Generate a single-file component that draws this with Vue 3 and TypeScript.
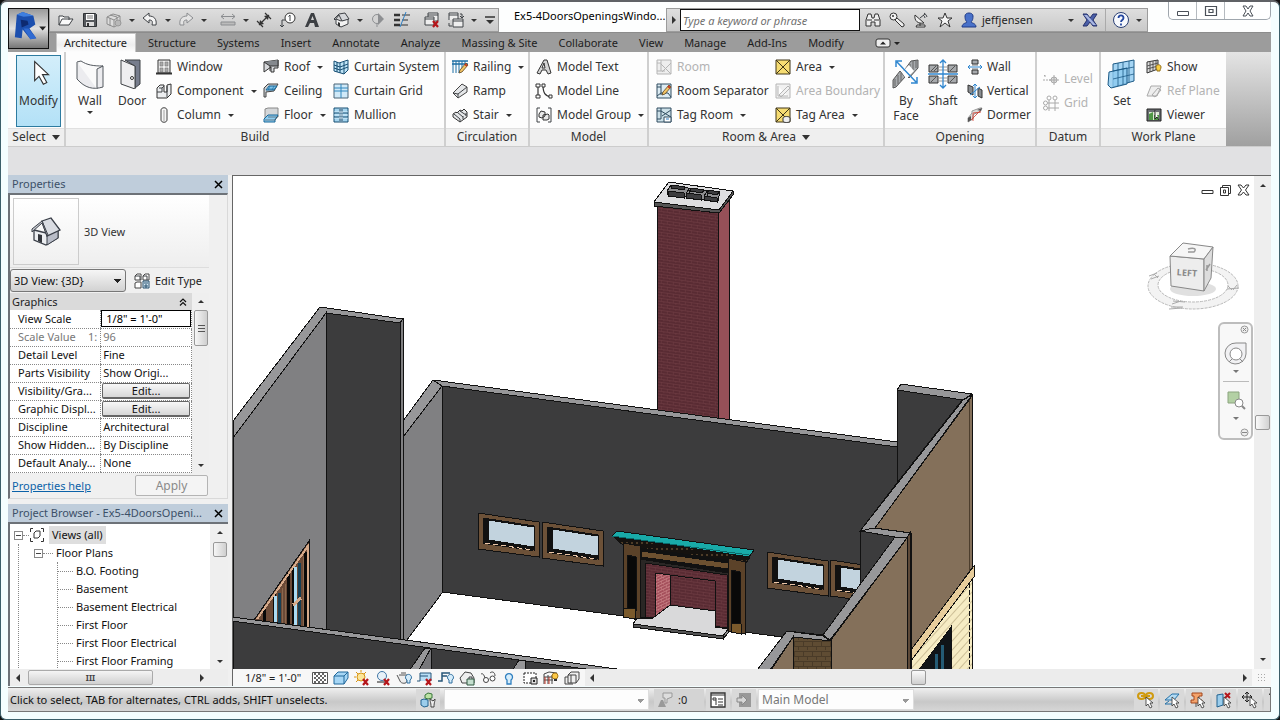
<script setup lang="ts">
import { ref } from 'vue'

interface Item { icon: string; label: string; drop?: boolean; off?: boolean }
interface Panel { key: string; title: string; drop?: boolean; large: Item[]; cols: Item[][] }

const G = 'fill="none" stroke="#3f4246"'
const redX = '<path d="M9 9l5 6M14 9l-5 6" stroke="#b5161b" stroke-width="2.2" fill="none"/>'
const bulb = '<path d="M11 10a3 3 0 1 1 3 0v3h-3z" fill="#d6edfb" stroke="#2f6f9f"/>'
const pointer = '<path d="M8 5v9l2-2 2 4 2-1-2-4h3z" fill="#fff" stroke="#333" stroke-width=".8"/>'
const pencil = '<path d="M6 12l1-3 6-7 2 2-6 7z" fill="#f4c565" stroke="#5a4220" stroke-width=".8"/><path d="M12 3l2 2" stroke="#c23b22" stroke-width="2"/>'

const icons: Record<string, string> = {
  open: `<path d="M1 13V4h4l1 1h5v3M1 13l3-6h11l-4 6z" fill="#fafafa" stroke="#3f4246"/>`,
  save: `<path d="M1.500 1.500h12l1 1v12h-13z" fill="#55585c" stroke="#2f3235"/><path d="M4 2h8v6H4z" fill="#fff"/><path d="M5 4h6M5 6h6" stroke="#777"/><path d="M4 10h8v4H4z" fill="#dcdcdc"/><path d="M5 11h2v3H5z" fill="#333"/>`,
  sync: `<path d="M1 5l6-3 7 2v8l-6 3-7-3zM1 5l7 3 6-4M8 8v7M4 3l7 2v8M4 6v8" fill="#ddd" stroke="#8c8c8c"/><circle cx="12" cy="11" r="3" fill="#b8b8b8" stroke="#999"/>`,
  undo: `<path d="M1 6l6-5v3c5 0 8 3 7 9h-4c1-4 0-5-3-5v3z" fill="#f4f4f4" stroke="#3f4246"/>`,
  redo: `<path d="M15 6L9 1v3C4 4 1 7 2 13h4c-1-4 0-5 3-5v3z" fill="#e4e4e4" stroke="#8b8d90"/>`,
  measure: `<path d="M1 4.500h14M4 2L1 4.500 4 7M12 2l3 2.500L12 7" fill="none" stroke="#8b8d90"/><path d="M1 10h14v3H1z" fill="#bbb" stroke="#8b8d90"/>`,
  dim: `<path d="M3 13L13 3M1 9l6 6M9 1l6 6" stroke="#333" stroke-width="1.200" fill="none"/><path d="M3 13l1-5 4 4zM13 3l-1 5-4-4z" fill="#333"/>`,
  tag: `<circle cx="10" cy="6" r="5" fill="#fff" stroke="#333"/><path d="M10 3v6M8.500 4.500L10 3" ${G}/><path d="M5 8H2v6M0 13l2 2 2-2" ${G}/>`,
  textA: `<path d="M1 15L7 1h3l5 14h-4l-1-4H6l-2 4zM7 8h3L8.500 4z" fill="#3c3f43" fill-rule="evenodd"/>`,
  house: `<path d="M2 7l5 2 7-3v6l-7 3-5-3z" fill="#f2f2f2" stroke="#3f4246"/><path d="M0 7l5-5 6-1 4 6-7 2-3-6-4 5z" fill="#d5d7da" stroke="#3f4246"/><path d="M4 10v4l2 1v-4z" fill="#333"/>`,
  section: `<circle cx="7" cy="7" r="4.500" fill="#d3d3d3" stroke="#8d8f92"/><path d="M8 1l6 6-6 6z" fill="#8d8f92"/><path d="M7 11v4" stroke="#8d8f92"/>`,
  thin: `<path d="M0 3h6M0 8h6M0 13h6" stroke="#333" stroke-width="2.500"/><path d="M8 3h8M8 8h6M7 13h7" stroke="#333"/><path d="M12 0L6 15" stroke="#2d7fc4"/>`,
  closeHidden: `<path d="M4 5V1h10v8h-3M1 5h9v8H1zM1 7h9M4 3h10" fill="#eee" stroke="#3f4246"/>${redX}`,
  switchWin: `<path d="M1 8V1h9v6M1 3h9M5 7h10v8H5zM5 9h10" fill="#eee" stroke="#3f4246"/><path d="M12 2h2v3M12 4l2 2 2-2M1 11v3h3" ${G}/>`,
  custom: `<path d="M1 5h10" stroke="#333" stroke-width="1.500"/><path d="M2 8h8l-4 4z" fill="#333"/>`,
  binoc: `<path d="M1 14V8l2-6h3l1 4h2l1-4h3l2 6v6h-5v-4H6v4z" fill="#eee" stroke="#333"/><path d="M2 8h5M9 8h5" stroke="#333"/>`,
  key: `<circle cx="4.500" cy="4.500" r="3.500" fill="#f3f3f3" stroke="#333"/><path d="M6 8l7 7 2-1v-2l-7-6z" fill="#eee" stroke="#333"/><circle cx="4" cy="4" r="1" fill="#333"/>`,
  dish: `<path d="M2 3c-1 6 3 9 9 8zM4 13h8v2H3zM7 11v3" fill="#eee" stroke="#333"/><path d="M7 6l5-4M12 6a4 4 0 0 0-2-3M14 5a6 6 0 0 0-3-4" ${G}/>`,
  star: `<path d="M8 1l2 5h5l-4 3 2 6-5-4-5 4 2-6-4-3h5z" fill="#f5f5f5" stroke="#333"/>`,
  user: `<path d="M4 4c0-4 8-4 8 0 0 4-1 5-2 6 0 1 5 1 5 5H1c0-4 5-4 5-5-1-1-2-2-2-6z" fill="#4971c9" stroke="#1e3a87"/>`,
  exchange: `<path d="M1 2h4l3 4 3-4h4l-4 6 4 6h-4l-3-4-3 4H1l4-6z" fill="#4b5fa8" stroke="#25306a"/><path d="M2 3h3l9 10h-3z" fill="#a9b7e2"/>`,
  help: `<circle cx="8" cy="8" r="7.500" fill="#f7f9fd" stroke="#2a3f74"/><path d="M5.500 6c0-3.500 5-3.500 5 0 0 2-2.500 2-2.500 4M8 11.500v2" fill="none" stroke="#2447a0" stroke-width="1.800"/>`,
  modify: `<path d="M10 3v22l5-5 5 9 4-2-5-9h7z" fill="#fff" stroke="#333" stroke-width="1.300"/>`,
  wall: `<path d="M2 3c6 5 12 5 20 6l6-2v21c-10 3-18 1-26-8z" fill="#ececef" stroke="#555a60"/><path d="M2 3l4-1c6 4 12 5 22 5l-6 3v20" fill="#fafafa" stroke="#555a60"/>`,
  door: `<path d="M8 1h15v24l-5 4V7z" fill="#777d8d" stroke="#3f4246"/><path d="M4 1v24l14 5V7z" fill="#eeeef0" stroke="#3f4246"/><circle cx="15" cy="19" r="1.500" fill="#fff" stroke="#333"/>`,
  window: `<path d="M2 1h12v13H2z" fill="#eee" stroke="#333"/><path d="M4 3h3v4H4zM9 3h3v4H9zM4 9h3v4H4zM9 9h3v4H9z" fill="#aaa" stroke="#777" stroke-width=".6"/><path d="M0 14.500h16" stroke="#333" stroke-width="2"/>`,
  component: `<path d="M1 5l3-3h4v7h3V2l4-1v10l-4 4H1z" fill="#eceef0" stroke="#333"/><path d="M1 9h5V5H3M11 3v11M6 5l2-2" ${G}/>`,
  column: `<path d="M5 3c0-3 6-3 6 0v10c0 3-6 3-6 0z" fill="#f6f6f6" stroke="#444"/><path d="M8 3v11" stroke="#ccc" stroke-width="2"/>`,
  roof: `<path d="M1 3l14-2v8h-4v4H8V8L1 13z" fill="#d7d9dc" stroke="#333"/><path d="M1 3l6 4h8V1M7 7v5" fill="#85898e" stroke="#333"/>`,
  ceiling: `<path d="M1 5l4-4h10l-4 7-8 1v5H1z" fill="#c9cdd1" stroke="#444"/><path d="M3 7l3-4h8l-3 4z" fill="#7ec4ec" stroke="#176798"/><path d="M5 6h7M7 3L5 7M11 3L9 7" stroke="#176798" stroke-width=".6"/>`,
  floor: `<path d="M2 2l3-1h10v9H5l-3 3z" fill="#d5d7d9" stroke="#888"/><path d="M1 12l4-4h10l-3 5v2H1z" fill="#8fcdf0" stroke="#176798"/><path d="M2 13h10l3-4M5 10h8" ${G} stroke-width=".6"/>`,
  curtainSys: `<path d="M1 2l5 2 9-3v10l-4 4-10-3z" fill="#bfe4f7" stroke="#174e73"/><path d="M4 3v10M7 4v10M11 3v12M1 6l6 2 8-3M1 9l6 2 8-3" fill="none" stroke="#174e73"/>`,
  curtainGrid: `<path d="M1 1h14v14H1z" fill="#cfe9f8" stroke="#4b6577"/><path d="M8 1v14M1 8h14M1 5h14" stroke="#3187be"/>`,
  mullion: `<path d="M1 1h14v14H1z" fill="#a4d4ee" stroke="#174e73"/><path d="M8 1v14" stroke="#174e73" stroke-width="4"/><path d="M1 5h14M1 8h14M1 11h14M7 1v14M9 1v14" stroke="#e7f6ff" stroke-width=".8"/><path d="M1 6h5M10 6h5M1 10h5M10 10h5" stroke="#174e73"/>`,
  railing: `<path d="M0 2h16M0 5h16" stroke="#1c6ea4" stroke-width="1.500"/><path d="M1 2v12M4 2v12M7 2v12M10 2v9M13 2v5" stroke="#1c6ea4"/><g transform="translate(1 2)">${pencil}</g>`,
  ramp: `<path d="M1 10L10 1l5 3v5l-9 6z" fill="#e5e7e9" stroke="#444"/><path d="M1 10l5 1 9-7M6 11v4" ${G}/>`,
  stair: `<path d="M1 7l3-2 1 1 3-3 2 1 2-2 3 3v5l-7 5-7-5z" fill="#e5e7e9" stroke="#333"/><path d="M2 7l6 5M5 5l6 5M8 4l6 4M8 12v3M11 9v3M14 6v3" ${G}/>`,
  modelText: `<path d="M1 14L8 1h3l4 13-3 1-2-4H6l-2 4zM6 9h3L8 4z" fill="#d5d5d5" fill-rule="evenodd" stroke="#333"/>`,
  modelLine: `<path d="M2 2v12M7 2c0 8 2 11 8 12" fill="none" stroke="#333" stroke-width="1.200"/><path d="M0 1h4v3H0zM0 12h4v3H0zM6 1h3v3H6zM13 12h3v3h-3z" fill="#fff" stroke="#333"/>`,
  modelGroup: `<path d="M4 1H1v14h3M12 1h3v14h-3" ${G}/><path d="M3 7l2-3 4 1v4l-3 2-3-1zM7 8l5-1 1 1v4l-2 1H7z" fill="#e9e9e9" stroke="#333"/>`,
  room: `<path d="M1 1h14v14H1zM1 4h4V1M5 4v8M1 12h8M5 5l10 10M15 4L6 13" fill="#eee" stroke="#b5b5b5"/>`,
  roomSep: `<path d="M1 1h14v14H1z" fill="#dcebf2" stroke="#304d60"/><path d="M1 4h4V1M5 4v8M1 13l4-3h7l3 4" fill="none" stroke="#304d60"/>${pencil}`,
  tagRoom: `<path d="M1 1h14v14H1z" fill="#cce0e8" stroke="#304d60"/><path d="M1 4h4V1M5 4v8M1 12h4M5 4l10 6M15 3L6 9" fill="none" stroke="#304d60"/><path d="M8 10h7v5H8z" fill="#fff" stroke="#304d60"/><path d="M10 12h3" stroke="#2d7fc4"/>`,
  area: `<path d="M1 1h14v14H1z" fill="#f6dc72" stroke="#3e3519"/><path d="M1 1l14 14M15 1L1 15" stroke="#3e3519"/>`,
  areaBound: `<path d="M1 1h14v14H1zM3 3v10h10M4 12L13 3l2 2-9 9z" fill="#f1f1f1" stroke="#b5b5b5"/>`,
  tagArea: `<path d="M1 1h14v14H1z" fill="#f6dc72" stroke="#3e3519"/><path d="M1 1l14 14M15 1L1 15" stroke="#3e3519"/><path d="M8 11c0-2 7-2 7 0v3c0 2-7 2-7 0z" fill="#eee" stroke="#333"/>`,
  byFace: `<path d="M20 2l7-1v8l-9 10-6-6zM2 29v-8l7-9 5 6-9 10z" fill="#a7aaad" stroke="#555"/><path d="M22 2v9M25 2v7M19 5v11M4 20v7M7 16v9M10 14v8" stroke="#666"/><path d="M11 13l7-7 5 6-8 8z" fill="#fff"/><path d="M6 3l19 20M5 8V2h6M20 24h6v-6" fill="none" stroke="#2f86cf" stroke-width="1.500"/>`,
  shaft: `<path d="M1 6h9v7H1zM20 6h9v7h-9zM1 17h9v7H1zM20 17h9v7h-9z" fill="#a7aaad" stroke="#333"/><path d="M3 12l5-5M6 12l4-4M22 12l5-5M3 23l5-5M22 23l5-5" stroke="#555"/><path d="M10 8h10M10 11h10M10 19h10M10 22h10" stroke="#999"/><path d="M15 1v28M12 4l3-3 3 3M12 26l3 3 3-3M0 15h30" fill="none" stroke="#2f86cf" stroke-width="1.300"/>`,
  openWall: `<path d="M5 1h6v4H5zM5 11h6v4H5z" fill="#a7aaad" stroke="#333"/><path d="M1 8h14M3 6L1 8l2 2M13 6l2 2-2 2" fill="none" stroke="#2f86cf"/><path d="M5 6h6M5 10h6" stroke="#777"/>`,
  openVert: `<path d="M1 2l5 2v8L1 9zM11 5l4 2v8l-4-2z" fill="#888c90" stroke="#333"/><path d="M8 1v14M6 3l2-2 2 2M6 13l2 2 2-2M3 12l10-8" fill="none" stroke="#2f86cf"/>`,
  dormer: `<path d="M1 15v-4l4-5v-2l8-3h2l-2 4-6 2-1 2v3z" fill="#ddd" stroke="#999"/><path d="M6 14V6l8-1M4 13L14 3" fill="none" stroke="#d23a2c" stroke-width=".8"/><path d="M10 3l5-2-1 3zM1 15v-4l3-2v4z" fill="#555"/>`,
  level: `<path d="M0 9h10M2 4v3M1 5l1-1" fill="none" stroke="#aaa" stroke-dasharray="2 1"/><circle cx="11" cy="9" r="3" fill="#ddd" stroke="#aaa"/><path d="M11 4v10M6 9h10" stroke="#aaa"/>`,
  grid: `<circle cx="6" cy="3" r="2" fill="#fff" stroke="#aaa"/><circle cx="12" cy="3" r="2" fill="#fff" stroke="#aaa"/><circle cx="2.500" cy="8" r="2" fill="#fff" stroke="#aaa"/><circle cx="2.500" cy="13" r="2" fill="#fff" stroke="#aaa"/><path d="M6 5v11M12 5v11M5 8h11M5 13h11" stroke="#aaa"/>`,
  set: `<path d="M6 5l21-4v21L6 28z" fill="#a5d5f4" stroke="#1d5a86"/><path d="M2 13l18-4v16L4 29l-3-3z" fill="#8cc9ef" fill-opacity=".8" stroke="#1d5a86"/><path d="M11 4v23M16 3v23M22 2v21M6 12l21-4M6 20l21-5" stroke="#1d5a86" stroke-width=".8"/>`,
  show: `<path d="M1 3l11-2v9L1 14z" fill="#ddd" stroke="#333"/><path d="M4 2v11M7 2v10M10 1v10M1 7l11-3M1 10l11-3" stroke="#555"/><path d="M10 8c0-3 5-3 5 0 0 2-1 2-1 4h-3c0-2-1-2-1-4z" fill="#f9cf42" stroke="#94701a"/>`,
  refPlane: `<path d="M1 13L5 3h10l-4 10zM6 12l6-7 3 2-6 7z" fill="#eee" stroke="#aaa"/>`,
  viewer: `<path d="M1 2h14v12H1z" fill="#6a6f73" stroke="#222"/><path d="M3 5h10v8H3z" fill="#dcead5"/><path d="M3 7l4-2v8H3zM8 8h5v5H8z" fill="#4f9846"/><path d="M9 3v9l2-2 2 3" fill="#fff" stroke="#222"/>`,
  editType: `<path d="M1 3l2-2h4v6H1zM9 3l2-2h4v6H9zM1 10l2-1h4v6H1z" fill="#fff" stroke="#444"/><path d="M1 3h5v4M9 3h4v4" ${G}/><path d="M9 8h6v7H9z" fill="#d7eaf5" stroke="#28516e"/><path d="M10 10h4M11 12h2v2h-2z" stroke="#28516e" fill="none"/>`,
  detail: `<path d="M.5 2.500h15v11H.5z" fill="#fff" stroke="#555"/><path d="M2 4h12M2 8h12M2 12h12" stroke="#666" stroke-width="2" stroke-dasharray="2 2"/><path d="M4 6h10M4 10h10" stroke="#666" stroke-width="2" stroke-dasharray="2 2"/>`,
  style: `<path d="M1 6l4-4h10v6l-4 6H1z" fill="#a6d6f5" stroke="#20689b"/><path d="M1 6h10v8M11 6l4-4" fill="none" stroke="#20689b"/>`,
  sun: `<circle cx="7" cy="7" r="4" fill="#fce69a" stroke="#d79413"/><path d="M7 0v2M0 7h2M2 2l2 2M2 12l2-2M12 2l-2 2" stroke="#d79413"/>${redX}`,
  shadow: `<circle cx="7" cy="6" r="4.500" fill="#e8f1f8" stroke="#4177a7"/><path d="M2 12h8" stroke="#888" stroke-width="2"/>${redX}`,
  render: `<path d="M3 5h8v6c0 3-6 3-7 0L1 5M5 3h5M11 6c4-1 4 4 1 4" fill="#eee" stroke="#555"/>${bulb}`,
  crop: `<path d="M0 11h3V3h11v8M3 6h8" fill="#b9def5" stroke="#27577a"/>${redX}`,
  cropShow: `<path d="M0 11h4V3h8M4 6h5" fill="none" stroke="#27577a" stroke-width="1.500"/>${bulb}`,
  lock: `<path d="M1 8l5-6 6 1 3 5v5H3z" fill="#eee" stroke="#444"/><path d="M8 9h7v6H8z" fill="#c5dfcf" stroke="#2f5940"/><path d="M10 9V7h3v2" ${G}/>`,
  glasses: `<path d="M1 4c2-1 3 1 4 4M10 3c2-2 5-1 5 3" fill="none" stroke="#444"/><circle cx="6" cy="10" r="2.500" fill="#fff" stroke="#444"/><circle cx="12.500" cy="8.500" r="2.500" fill="#fff" stroke="#444"/>`,
  reveal: `<path d="M6 10a3.500 3.500 0 1 1 4 0v4H6z" fill="#d6edfb" stroke="#2f7fbf" stroke-width="1.300"/>`,
  tempView: `<path d="M2 3h12v10H2z" fill="#fff" stroke="#222" stroke-dasharray="2 1"/><path d="M9 8h6v6H9z" fill="#ddd" stroke="#222"/><path d="M11 10h2v2h-2z" fill="#222"/>`,
  analytic: `<path d="M1 14V4l5-2 8 1M5 14V5M9 14V5M1 7h9M1 10h9" fill="none" stroke="#444"/><path d="M2 7v7M6 7v7" stroke="#c43a2c"/><circle cx="12" cy="6" r="3" fill="#fbc848" stroke="#a57716"/><path d="M11 10h3" stroke="#333" stroke-width="2"/>`,
  highlight: `<path d="M4 5l3-3h8v7l-3 4M4 5h8v8H4zM1 7h3M1 7v7h8" fill="#eee" stroke="#444"/><path d="M7 5v8" stroke="#444"/>`,
  workset: `<path d="M1 8l3-1 4 1v6l-4 1-3-2z" fill="#9bcdec" stroke="#226390"/><path d="M5 3l3-2 4 1v4l-4 1-3-1z" fill="#bce2a4" stroke="#38763a"/><path d="M10 7c0 3 1 3 1 8h3c0-5 1-5 1-8l-2 2z" fill="#eee" stroke="#444"/>`,
  filterOff: `<path d="M6 1h9v4l-5 2v4H8V6H6z" fill="#ddd" stroke="#999"/><path d="M1 15l3-7h2l3 7z" fill="#999"/>`,
  options: `<path d="M1 1h14v14H1z" fill="#fff" stroke="#333" stroke-width="1.300"/><path d="M1 3h14M3 6h3v2H3zM8 7h5M8 10h5M8 13h5M6 8v5" stroke="#333" fill="none"/>`,
  addSet: `<path d="M3 1h12v14H3z" fill="#999"/><path d="M1 6h5V3l5 5-5 5v-3H1z" fill="#d6d6d6" stroke="#888"/>`,
  selLink: `<path d="M0 4c0-4 7-4 7 0M0 4c0 4 7 4 7 0M8 4c0-4 7-4 7 0M8 4c0 4 7 4 7 0M3 4h9" fill="none" stroke="#d09b10" stroke-width="2"/>${pointer}`,
  selUnder: `<path d="M1 8l7-6h7l-5 6zM1 12l4-3" fill="#b4dbf3" stroke="#2471a7"/><path d="M1 12h8" stroke="#2471a7"/>${pointer}`,
  selPin: `<path d="M2 1h10v3H9v4h3v3H1V8h3V4H2z" fill="#f4a36c" stroke="#a3461d"/><path d="M6 11v4" stroke="#555"/>${pointer}`,
  selFace: `<path d="M1 3l6-1v11l-6 2z" fill="#9bcdec" stroke="#226390"/><path d="M9 1l5 5M14 1L9 6" stroke="#b5161b" stroke-width="2"/>${pointer}`,
  selDrag: `<path d="M5 0v10M0 5h10M3 2l2-2 2 2M3 8l2 2 2-2M2 3L0 5l2 2M8 3l2 2-2 2" fill="none" stroke="#222"/>${pointer}`,
  filter: `<path d="M1 2h14L10 8v6l-3-2V8z" fill="#f4f4f4" stroke="#444"/>`,
}

const qat: string[] = ['open', 'save', 'sync', '>', 'undo', '>', 'redo', '>', '|', 'measure', '>', 'dim', 'tag', 'textA', '|', 'house', '>', 'section', 'thin', '|', 'closeHidden', 'switchWin', '>', 'custom']
const tabs: string[] = ['Architecture', 'Structure', 'Systems', 'Insert', 'Annotate', 'Analyze', 'Massing & Site', 'Collaborate', 'View', 'Manage', 'Add-Ins', 'Modify']
const activeTab = ref('Architecture')

const panels: Panel[] = [
  { key: 'select', title: 'Select', drop: true, large: [{ icon: 'modify', label: 'Modify' }], cols: [] },
  { key: 'build', title: 'Build', large: [{ icon: 'wall', label: 'Wall', drop: true }, { icon: 'door', label: 'Door' }], cols: [
    [{ icon: 'window', label: 'Window' }, { icon: 'component', label: 'Component', drop: true }, { icon: 'column', label: 'Column', drop: true }],
    [{ icon: 'roof', label: 'Roof', drop: true }, { icon: 'ceiling', label: 'Ceiling' }, { icon: 'floor', label: 'Floor', drop: true }],
    [{ icon: 'curtainSys', label: 'Curtain System' }, { icon: 'curtainGrid', label: 'Curtain Grid' }, { icon: 'mullion', label: 'Mullion' }]] },
  { key: 'circulation', title: 'Circulation', large: [], cols: [
    [{ icon: 'railing', label: 'Railing', drop: true }, { icon: 'ramp', label: 'Ramp' }, { icon: 'stair', label: 'Stair', drop: true }]] },
  { key: 'model', title: 'Model', large: [], cols: [
    [{ icon: 'modelText', label: 'Model Text' }, { icon: 'modelLine', label: 'Model Line' }, { icon: 'modelGroup', label: 'Model Group', drop: true }]] },
  { key: 'room', title: 'Room & Area', drop: true, large: [], cols: [
    [{ icon: 'room', label: 'Room', off: true }, { icon: 'roomSep', label: 'Room Separator' }, { icon: 'tagRoom', label: 'Tag Room', drop: true }],
    [{ icon: 'area', label: 'Area', drop: true }, { icon: 'areaBound', label: 'Area Boundary', off: true }, { icon: 'tagArea', label: 'Tag Area', drop: true }]] },
  { key: 'opening', title: 'Opening', large: [{ icon: 'byFace', label: 'By Face' }, { icon: 'shaft', label: 'Shaft' }], cols: [
    [{ icon: 'openWall', label: 'Wall' }, { icon: 'openVert', label: 'Vertical' }, { icon: 'dormer', label: 'Dormer' }]] },
  { key: 'datum', title: 'Datum', large: [], cols: [
    [{ icon: 'level', label: 'Level', off: true }, { icon: 'grid', label: 'Grid', off: true }]] },
  { key: 'plane', title: 'Work Plane', large: [{ icon: 'set', label: 'Set' }], cols: [
    [{ icon: 'show', label: 'Show' }, { icon: 'refPlane', label: 'Ref Plane', off: true }, { icon: 'viewer', label: 'Viewer' }]] },
]

const viewScale = ref('1/8" = 1\'-0"')
const query = ref('')
const props: { name: string; value: string; kind?: string }[] = [
  { name: 'Detail Level', value: 'Fine' },
  { name: 'Parts Visibility', value: 'Show Origi...' },
  { name: 'Visibility/Gra...', value: 'Edit...', kind: 'button' },
  { name: 'Graphic Displ...', value: 'Edit...', kind: 'button' },
  { name: 'Discipline', value: 'Architectural' },
  { name: 'Show Hidden...', value: 'By Discipline' },
  { name: 'Default Analy...', value: 'None' },
]
const plans: string[] = ['B.O. Footing', 'Basement', 'Basement Electrical', 'First Floor', 'First Floor Electrical', 'First Floor Framing']
const viewIcons: string[] = ['detail', 'style', 'sun', 'shadow', 'render', 'crop', 'cropShow', 'lock', 'glasses', 'reveal', 'tempView', 'analytic', 'highlight']
const selIcons: string[] = ['selLink', 'selUnder', 'selPin', 'selFace', 'selDrag', 'filter']
const wallWindows: { x: number; y: number }[] = [{ x: 478, y: 513 }, { x: 542, y: 522 }, { x: 767, y: 552 }, { x: 830, y: 560 }]
</script>

<template>
  <div class="window">
    <header class="titlebar">
      <button class="app" aria-label="Application menu">
        <svg viewBox="0 0 40 40">
          <path d="M8 6l6-3 11 4 2 9-6 4 7 10-6 1-8-10-1 9-7-1z" fill="#1c4fae" />
          <path d="M8 6l6-3 11 4-10 1z" fill="#3f7fe0" />
          <path d="M12 11l7 1 1 4-7 3z" fill="#0e2a70" />
          <path d="M15 20l5 0 8 10-6 1z" fill="#2f6ad2" />
          <path d="M31 18h7l-3.500 4z" fill="#222" />
        </svg>
      </button>
      <nav class="qat" aria-label="Quick access">
        <template v-for="(q, i) in qat" :key="i">
          <span v-if="q === '|'" class="qsep"></span>
          <button v-else-if="q === '>'" class="tiny" aria-label="More"><i class="caret"></i></button>
          <button v-else class="plain" :aria-label="q"><svg class="ic" viewBox="0 0 16 16" v-html="icons[q]"></svg></button>
        </template>
      </nav>
      <div class="doc">Ex5-4DoorsOpeningsWindo...</div>
      <div class="info">
        <button class="toggle" aria-label="Collapse search"><i class="caret right"></i></button>
        <input v-model="query" class="search" type="text" placeholder="Type a keyword or phrase" aria-label="Search">
        <div class="infoicons">
          <button v-for="n in ['binoc', 'key', 'dish', 'star']" :key="n" class="plain" :aria-label="n"><svg class="ic" viewBox="0 0 16 16" v-html="icons[n]"></svg></button>
          <button class="account"><svg class="ic" viewBox="0 0 16 16" v-html="icons.user"></svg><span>jeffjensen</span><i class="caret"></i></button>
          <button class="plain" aria-label="Exchange"><svg class="ic" viewBox="0 0 16 16" v-html="icons.exchange"></svg></button>
          <span class="qsep"></span>
          <button class="plain" aria-label="Help"><svg class="ic" viewBox="0 0 16 16" v-html="icons.help"></svg></button>
          <button class="tiny" aria-label="Help options"><i class="caret"></i></button>
        </div>
      </div>
      <div class="winbtns">
        <button aria-label="Minimize"><svg viewBox="0 0 14 12"><path d="M1.500 6.500h11v4h-11z" fill="#fff" stroke="#4b5058" /></svg></button>
        <button aria-label="Restore"><svg viewBox="0 0 14 12"><path d="M1.500 1.500h11v9h-11z M5 4.500h4v3H5z" fill="#fff" stroke="#4b5058" stroke-width="1.200" /></svg></button>
        <button class="x" aria-label="Close"><svg viewBox="0 0 14 12"><path d="M2 1h3l2 3 2-3h3L9 6l3 5H9L7 8l-2 3H2l3-5z" fill="#fff" stroke="#4b5058" /></svg></button>
      </div>
    </header>

    <div class="tabs" role="tablist">
      <button v-for="t in tabs" :key="t" role="tab" class="tab" :class="{ on: t === activeTab }" @click="activeTab = t">{{ t }}</button>
      <button class="collapse" aria-label="Minimize ribbon">
        <svg viewBox="0 0 26 10"><rect x="1" y="1" width="14" height="8" rx="2" fill="#eee" stroke="#333" /><path d="M5 6.500h6L8 3.500z M19 4h6l-3 3z" fill="#222" /></svg>
      </button>
    </div>

    <div class="ribbon">
      <section v-for="p in panels" :key="p.key" class="panel" :class="'p-' + p.key">
        <div class="pbody">
          <button v-for="l in p.large" :key="l.label" class="large" :class="'l-' + l.icon">
            <svg viewBox="0 0 30 30" v-html="icons[l.icon]"></svg>
            <span>{{ l.label }}</span>
            <i v-if="l.drop" class="caret"></i>
          </button>
          <div v-for="(c, ci) in p.cols" :key="ci" class="pcol">
            <button v-for="b in c" :key="b.label" class="item" :disabled="b.off">
              <svg class="ic" viewBox="0 0 16 16" v-html="icons[b.icon]"></svg>
              <span>{{ b.label }}</span>
              <i v-if="b.drop" class="caret"></i>
            </button>
          </div>
        </div>
        <h2 class="ptitle">{{ p.title }}<i v-if="p.drop" class="caret big"></i></h2>
      </section>
    </div>
    <div class="optionbar"></div>

    <main class="work">
      <aside class="side">
        <section class="props">
          <div class="dockhead"><h3>Properties</h3><button aria-label="Close properties"><svg viewBox="0 0 9 9"><path d="M1 1l7 7M8 1L1 8" stroke="#000" stroke-width="1.500" /></svg></button></div>
          <div class="propbody">
            <div class="typebox">
              <div class="thumb">
                <svg viewBox="0 0 32 32"><path d="M4 14l12 3 12-5v10l-12 7-12-5z" fill="#eceef1" stroke="#3b4049" stroke-width="1.300" /><path d="M17 19l11-5v8l-11 7z" fill="#b9bdc8" stroke="#3b4049" /><path d="M8 18l4 1v8l-4-2z" fill="#33363c" /><path d="M12 5l9-3 9 12-13 6z" fill="#d9dce2" stroke="#3b4049" stroke-width="1.300" /><path d="M17 20L12 7 2 16V13L12 5l6 14z" fill="#c6c9d0" stroke="#3b4049" /></svg>
              </div>
              <span>3D View</span>
            </div>
            <div class="typerow">
              <select aria-label="View type"><option>3D View: {3D}</option></select>
              <button class="edittype"><svg class="ic" viewBox="0 0 16 16" v-html="icons.editType"></svg>Edit Type</button>
            </div>
            <div class="gridwrap">
              <table>
                <thead><tr><th colspan="2" scope="colgroup">Graphics<svg class="chev" viewBox="0 0 8 8"><path d="M1 4l3-3 3 3M1 7.500l3-3 3 3" fill="none" stroke="#111" stroke-width="1.200" /></svg></th></tr></thead>
                <tbody>
                  <tr><td><label for="vs">View Scale</label></td><td class="edit"><input id="vs" v-model="viewScale" type="text"></td></tr>
                  <tr class="dim"><td><span class="split"><span>Scale Value</span><span>1:</span></span></td><td>96</td></tr>
                  <tr v-for="r in props" :key="r.name">
                    <td>{{ r.name }}</td>
                    <td :class="{ btncell: r.kind }"><button v-if="r.kind" class="editbtn">{{ r.value }}</button><template v-else>{{ r.value }}</template></td>
                  </tr>
                </tbody>
              </table>
              <div class="vscroll"><i class="caret up"></i><b class="thumb1"></b><i class="caret down"></i></div>
            </div>
            <div class="propfoot"><a href="#">Properties help</a><button disabled>Apply</button></div>
          </div>
        </section>

        <section class="browser">
          <div class="dockhead"><h3>Project Browser - Ex5-4DoorsOpeni...</h3><button aria-label="Close browser"><svg viewBox="0 0 9 9"><path d="M1 1l7 7M8 1L1 8" stroke="#000" stroke-width="1.500" /></svg></button></div>
          <div class="treewrap">
            <ul class="tree">
              <li class="root"><span class="node"><i class="box"></i><i class="dots"></i><svg class="ic" viewBox="0 0 16 16"><path d="M4 1.500H1.500V5M12 1.500h2.500V5M4 14.500H1.500V11M12 14.500h2.500V11M5 6l2-2h4v5l-2 2H5z" fill="none" stroke="#333" /></svg><em>Views (all)</em></span>
                <ul>
                  <li class="branch"><span class="node"><i class="box"></i><i class="dots"></i>Floor Plans</span>
                    <ul><li v-for="p in plans" :key="p" class="leaf"><span class="node"><i class="dots long"></i>{{ p }}</span></li></ul>
                  </li>
                </ul>
              </li>
            </ul>
            <div class="vscroll wide"><i class="caret up"></i><b class="thumb2"></b><i class="caret down"></i></div>
          </div>
          <div class="hscroll"><i class="caret left"></i><b>III</b><i class="caret right"></i></div>
        </section>
      </aside>

      <section class="canvas">
        <div class="viewrow">
          <div class="view">
            <svg class="scene" viewBox="233 176 1021 493" preserveAspectRatio="xMinYMin slice" shape-rendering="crispEdges" stroke="#111" stroke-width="1">
              <defs>
                <pattern id="brick" width="6" height="6" patternUnits="userSpaceOnUse" patternTransform="skewY(8)"><rect width="6" height="6" fill="#592b33" stroke="none" /><path d="M0 1h6M0 4h6M1 1v3M4 4v3" stroke="#6e3c43" stroke-width=".7" /></pattern>
                <pattern id="brick2" width="5" height="6" patternUnits="userSpaceOnUse" patternTransform="skewY(-25)"><rect width="5" height="6" fill="#a5505c" stroke="none" /><path d="M0 1h5M0 4h5M1 1v3M4 4v3" stroke="#cf8a8e" stroke-width=".7" /></pattern>
                <pattern id="shake" width="9" height="10" patternUnits="userSpaceOnUse"><rect width="9" height="10" fill="#5f4c33" stroke="none" /><path d="M0 1h9M0 6h9M2 1v5M6 6v5" stroke="#4a3b28" /></pattern>
                <pattern id="siding" width="6" height="6" patternUnits="userSpaceOnUse" patternTransform="rotate(-48)"><rect width="6" height="6" fill="#f6ecc4" stroke="none" /><path d="M0 2h6" stroke="#c3b48c" stroke-width=".8" /></pattern>
                <pattern id="dentil" width="5" height="6" patternUnits="userSpaceOnUse"><rect width="5" height="6" fill="#15120f" stroke="none" /><path d="M1 2h2v2H1z" fill="#4d3c28" stroke="none" /></pattern>
              </defs>

              <path d="M657 206l61 7v207l-61-8z" fill="url(#brick)" />
              <path d="M718 213l11-16v224l-11-1z" fill="#965058" />
              <path d="M654 202l15-20 64 9v4l-14 18-65-7z" fill="#555" />
              <path d="M654 202l15-20 64 9-14 19z" fill="#dedee0" />
              <path d="M667 191l4-6 14 2 3 1 2 5-3 4-19-2zM686 193l4-5 14 2 3 1 1 5-5 4-17-2zM704 196l4-6 12 2-2 9-14-2z" fill="#8e8e90" />
              <path d="M668 191l16 2v5l-16-2zM686 193l15 2v5l-15-2zM704 196l13 2v4l-13-2zM672 185l13 2-1 3-13-2zM691 188l13 2-2 3-12-2zM709 190l10 2-2 3-10-2z" fill="#3d3d3f" />

              <path d="M233 421l87-114 83 12v5l-77-11-93 125z" fill="#979799" />
              <path d="M233 438l93-125v320l-93-12z" fill="#808082" />
              <path d="M326 313l74 10v320l-74-11z" fill="#3c3c3d" />
              <path d="M400 323l3-4v321h-3z" fill="#808082" />
              <path d="M403 421l30-41 9 6-39 51z" fill="#979799" />
              <path d="M403 437l39-51v207l-35 47h-4z" fill="#808082" />
              <path d="M433 380l464 62v5l-455-61z" fill="#979799" />
              <path d="M442 386l455 61v36l-37 48v55l-37 49-36-4-5 6-340-45z" fill="#3c3c3d" />
              <path d="M897 390l66 9-66 84z" fill="#3c3c3d" />
              <path d="M897 390l4-6 71 10-9 6z" fill="#979799" />

              <path d="M254 620l55-79v86z" fill="#6b4a37" />
              <path d="M264 606v18M274 594v29M288 573v52M293 567v57M305 552v74" stroke="#090909" stroke-width="3" />
              <path d="M275 596v27M295 567v58" stroke="#aadbf3" stroke-width="3" />
              <path d="M279 593v30M299 563v62" stroke="#173f54" stroke-width="3" />
              <path d="M282 588v35M285 584v39M303 557v69" stroke="#8a674d" />
              <path d="M293 605l8-7" stroke="#d7ab8b" stroke-width="3" />
              <path d="M254 620l55-79" />
              <path d="M257 619l51-73v81" fill="none" stroke="#d7ab8b" stroke-width="2" />
              <path d="M309 541v86" />

              <g v-for="w in wallWindows" :key="w.x" :transform="`translate(${w.x} ${w.y})`">
                <path d="M0 0l61 9v35L0 36z" fill="#6c5138" />
                <path d="M5 5l51 8v24L5 30z" fill="#111" />
                <path d="M10 7l46 7v20l-46-7z" fill="#c2d3de" />
                <path d="M7 29l48 7" stroke="#111" stroke-width="4" />
                <path d="M7 30l48 7" stroke="#eac6a8" stroke-dasharray="5 3" />
              </g>

              <path d="M614 537l6 6 5 3 121 17 4-6z" fill="url(#dentil)" />
              <path d="M623 543l17 3v74l-17-3z" fill="#5b4229" />
              <path d="M627 555l9 2v53l-9-2z" fill="#090909" />
              <path d="M623 608l12 1v10l-12-2z" fill="#7b5a2c" />
              <path d="M728 558l17 4v72l-17-3z" fill="#5b4229" />
              <path d="M731 570l9 2v53l-9-2z" fill="#090909" />
              <path d="M731 623l10 1v10l-10-2z" fill="#7b5a2c" />
              <path d="M640 548l88 12v13l-88-11z" fill="#111" />
              <path d="M641 551l87 12v6l-87-12z" fill="#6c5030" />
              <path d="M640 559l88 14v58l-88-14z" fill="#2a2725" />
              <path d="M645 563l82 12v53l-82-11z" fill="url(#brick)" />
              <path d="M655 573l60 8v46l-60-8z" fill="url(#brick)" />
              <path d="M655 573l15 2v31l-15 12z" fill="url(#brick2)" />
              <path d="M653 618l17-13 45 6v16l13 2-5 7-90-12 4-6z" fill="#d9d9da" />
              <path d="M633 624l90 12v3l-90-12z" fill="#555" />
              <path d="M723 636l5-7v4l-5 6z" fill="#888" />
              <path d="M612 536l5-5 137 19-5 7z" fill="#19aaa8" />
              <path d="M612 536l137 19" stroke="#0b6b6c" />

              <path d="M963 400l9-5-97 133-15 3z" fill="#979799" />
              <path d="M875 528l97-132v172l-61 84v-119z" fill="#84705a" />
              <path d="M969 400v172" stroke="#4c3d2c" />
              <path d="M860 531l35 6-35 48z" fill="#3c3c3d" />
              <path d="M860 531l14-3 36 5-3 5-12-1z" fill="#979799" />
              <path d="M911 660l61-82v92h-61z" fill="url(#siding)" />
              <path d="M911 650l63-84v11l-63 84z" fill="#e7cd9c" />
              <path d="M969 583v87" stroke-dasharray="5 2" />
              <path d="M919 670l32-43v43z" fill="#101418" />
              <path d="M936 654v16M942 645v25" stroke="#245b75" stroke-width="3" />
              <path d="M895 537l12 1-77 102-7-5z" fill="#979799" />
              <path d="M907 538v132h-76v-30z" fill="#84705a" />
              <path d="M907 538l3-5v137h-3z" fill="#5e4a39" />
              <path d="M787 631l36 5 7 5-37-4-23 33h-13z" fill="#979799" />
              <path d="M793 637v33h-22z" fill="#84705a" />
              <path d="M793 637l38 4v29h-38z" fill="url(#shake)" />

              <path d="M233 621l197 27 163 22H233z" fill="#3c3c3d" />
              <path d="M232 617l196 26 196 27h-31l-163-22-198-27z" fill="#979799" />
              <path d="M425 648l6 1v22h-22z" fill="#979799" />
              <path d="M431 648v22h-12z" fill="#77777a" />
              <path d="M519 660l6 1v10h-13z" fill="#979799" />
            </svg>
            <div class="mdi">
              <button aria-label="Minimize view"><svg viewBox="0 0 13 12"><path d="M1 6.500h11v3H1z" fill="#fff" stroke="#333" /></svg></button>
              <button aria-label="Restore view"><svg viewBox="0 0 13 12"><path d="M3.500 3V1.500h8v8H10M1.500 3.500h8v8h-8zM4.500 6h2v3h-2z" fill="#fff" stroke="#333" /></svg></button>
              <button aria-label="Close view"><svg viewBox="0 0 13 12"><path d="M1 1h3l2.500 3L9 1h3L8.500 6l3.500 5H9L6.500 8 4 11H1l3.500-5z" fill="#fff" stroke="#333" /></svg></button>
            </div>
            <svg class="cube" viewBox="1144 240 98 72">
              <ellipse cx="1192" cy="286" rx="45" ry="23" fill="#f3f3f3" stroke="#b9b9b9" stroke-dasharray="3 1" />
              <ellipse cx="1192" cy="285" rx="35" ry="17" fill="#fff" stroke="#b9b9b9" stroke-dasharray="3 1" />
              <ellipse cx="1192" cy="289" rx="23" ry="7" fill="#e0e0e0" />
              <path d="M1169 256l34 3v32l-33-5z" fill="#ededed" stroke="#888" />
              <path d="M1169 256l13-13 30 4-9 12z" fill="#f6f6f6" stroke="#888" />
              <path d="M1203 259l9-12-2 31-7 13z" fill="#ddd" stroke="#888" />
              <path d="M1187 249c6-2 9 0 6 3h-6M1205 270l4-6M1206 265v6" fill="none" stroke="#999" stroke-width="1.500" />
              <path d="M1148 276l8-3M1150 279l8-3M1153 274l4 4M1226 289l12-1M1227 286l4 4M1232 290l4-5M1172 301l12 1M1171 304l9-3M1170 307l12 0M1168 309l13-1" fill="none" stroke="#aaa" />
              <text x="1186" y="276" text-anchor="middle" transform="rotate(4 1186 272)">LEFT</text>
            </svg>
            <div class="navbar">
              <button class="mini" aria-label="Close navigation bar"><svg viewBox="0 0 9 9"><circle cx="4.500" cy="4.500" r="3.500" fill="#eee" stroke="#999" /><path d="M3 3l3 3M6 3L3 6" stroke="#888" /></svg></button>
              <button aria-label="Steering wheel"><svg class="nv" viewBox="0 0 24 24"><path d="M12 1h10v11a10.500 10.500 0 1 1-10-11z" fill="#f1f1f3" stroke="#888" /><circle cx="12" cy="12" r="6" fill="#fff" stroke="#888" /><path d="M8 17l-3 3M16 17l3 3" stroke="#888" /></svg><i class="caret"></i></button>
              <hr>
              <button aria-label="Zoom"><svg class="nv" viewBox="0 0 24 24"><path d="M4 3h11v11H4z" fill="#b3d0a4" stroke="#8ba47f" /><circle cx="15" cy="14" r="4" fill="#fff" stroke="#888" /><path d="M18 17l3 3" stroke="#888" stroke-width="2" /></svg><i class="caret"></i></button>
              <button class="mini" aria-label="Navigation options"><svg viewBox="0 0 9 9"><circle cx="4.500" cy="4.500" r="3.500" fill="#eee" stroke="#999" /><path d="M2 4.500h5" stroke="#888" /></svg></button>
            </div>
          </div>
          <div class="viewscroll"><i class="caret up"></i><b></b><i class="caret down"></i></div>
        </div>
        <div class="viewbar">
          <button class="scale">1/8" = 1'-0"</button>
          <button v-for="v in viewIcons" :key="v" class="plain" :aria-label="v"><svg class="ic" viewBox="0 0 16 16" v-html="icons[v]"></svg></button>
          <div class="hbar"><i class="caret left"></i><b></b><i class="caret right"></i></div>
          <span class="grip"></span>
        </div>
      </section>
    </main>

    <footer class="status">
      <span class="msg">Click to select, TAB for alternates, CTRL adds, SHIFT unselects.</span>
      <button class="sb" aria-label="Worksets"><svg class="ic" viewBox="0 0 16 16" v-html="icons.workset"></svg></button>
      <select class="ws" aria-label="Active workset"><option></option></select>
      <button class="sb count" disabled><svg class="ic" viewBox="0 0 16 16" v-html="icons.filterOff"></svg><span>:0</span></button>
      <button class="sb" aria-label="Design options"><svg class="ic" viewBox="0 0 16 16" v-html="icons.options"></svg></button>
      <button class="sb" aria-label="Add to set"><svg class="ic" viewBox="0 0 16 16" v-html="icons.addSet"></svg></button>
      <select class="opt" aria-label="Design option"><option>Main Model</option></select>
      <div class="sel"><button v-for="s in selIcons" :key="s" class="sb" :aria-label="s"><svg class="ic" viewBox="0 0 16 16" v-html="icons[s]"></svg></button></div>
    </footer>
  </div>
</template>

<style>
html, body { margin: 0; background: #111; }
</style>

<style scoped>
* { box-sizing: border-box; }
.window { height: 100vh; min-height: 560px; display: flex; flex-direction: column; padding: 0 8px 7px 7px; border: 1px solid #3b5f6a; border-top: 2px solid #606266; border-radius: 7px 7px 6px 6px; background: #f4feff; overflow: hidden; font-family: "Noto Sans", "Open Sans", sans-serif; font-size: 11px; line-height: 16px; color: #222; }
button { font: inherit; color: inherit; background: none; border: 0; padding: 0; margin: 0; display: flex; align-items: center; justify-content: center; }
svg { display: block; flex: none; }
.ic { width: 16px; height: 16px; overflow: visible; }
.caret { flex: none; width: 0; height: 0; border: 3px solid transparent; border-top-color: #333; border-bottom-width: 0; }
.caret.up { border-width: 0 3px 3px; border-bottom-color: #333; }
.caret.right { border-width: 4px 0 4px 4px; border-color: transparent transparent transparent #333; }
.caret.left { border-width: 4px 4px 4px 0; border-color: transparent #333 transparent transparent; }
.caret.big { border-width: 5px 4px 0; margin-left: 6px; }

.titlebar { height: 30px; flex: none; display: flex; position: relative; background: #fdfefe; padding-left: 41px; }
.app { position: absolute; left: 0; top: 6px; width: 41px; height: 41px; z-index: 2; border: 1px solid #111; background: linear-gradient(#9a9a9a, #e0e0e0 50%, #777); }
.app svg { width: 39px; height: 39px; }
.qat { display: flex; align-items: center; gap: 8px; height: 24px; margin-top: 6px; padding: 0 8px; width: 450px; background: linear-gradient(#dedede, #c9c9c9); border: 1px solid #9c9c9c; }
.tiny { width: 4px; height: 16px; }
.qsep { width: 1px; height: 22px; background: #aaa; margin: 0 -1px; }
.doc { flex: 1; min-width: 0; margin-top: 6px; padding-left: 15px; white-space: nowrap; overflow: hidden; color: #000; }
.info { display: flex; height: 24px; margin-top: 6px; width: 482px; flex: none; background: linear-gradient(#dedede, #c9c9c9); border: 1px solid #9c9c9c; }
.toggle { width: 13px; }
.search { width: 180px; height: 22px; border: 1px solid #111; background: #fff; font: italic 11px/16px "Noto Sans", "Open Sans", sans-serif; padding: 0 2px; outline: 0; }
.search::placeholder { color: #6f6f6f; opacity: 1; }
.infoicons { flex: 1; display: flex; align-items: center; gap: 8px; padding: 0 5px; }
.account { width: 113px; justify-content: flex-start; gap: 5px; }
.account .caret { margin-left: auto; }
.winbtns { display: flex; height: 18px; width: 103px; margin-left: 20px; border: 1px solid #9fa6ad; border-top: 0; border-radius: 0 0 5px 5px; background: #fff; flex: none; }
.winbtns button { width: 28px; border-right: 1px solid #b5babf; }
.winbtns button.x { flex: 1; border: 0; }
.winbtns svg { width: 14px; height: 12px; }

.tabs { flex: none; display: flex; height: 20px; padding-left: 48px; background: #9c9c9c; border-top: 1px solid #8c8c8c; }
.tab { padding: 0 11px 0 10px; white-space: nowrap; color: #1c1c1c; font-size: 11px; }
.tab.on { padding: 0 8px 0 7px; margin-right: 2px; background: linear-gradient(#fff, #eee 60%, #fdfdfd); border: 1px solid #c6c6c6; border-bottom: 0; }
.collapse { margin-left: 20px; }
.collapse svg { width: 26px; height: 10px; }

.ribbon { flex: none; display: flex; background: linear-gradient(#e4e4e4, #a0a0a0); height: 95px; border-bottom: 1px solid #ccc; }
.panel { display: flex; flex-direction: column; flex: none; background: #fdfdfd; border-right: 2px solid #cfcfcf; }
.pbody { flex: 1; display: flex; align-items: flex-start; padding-top: 3px; }
.ptitle { margin: 0; height: 18px; font: inherit; font-size: 12px; line-height: 16px; background: #efefef; border-top: 1px solid #e0e0e0; padding-bottom: 1px; display: flex; justify-content: center; align-items: center; color: #333; white-space: nowrap; }
.p-select { width: 58px; }
.p-build { width: 380px; }
.p-circulation { width: 84px; }
.p-model { width: 119px; }
.p-room { width: 236px; }
.p-opening { width: 152px; }
.p-datum { width: 64px; }
.p-plane { width: 125px; border-right: 0; }
.large { flex-direction: column; justify-content: flex-start; font-size: 12px; line-height: 15px; color: #333; height: 72px; padding-top: 4px; }
.large svg { width: 30px; height: 30px; margin-bottom: 4px; }
.large .caret { margin-top: 3px; }
.l-modify { width: 45px; margin-left: 8px; background: linear-gradient(#d3eefa, #b3e1f7); border: 1px solid #2d7ba0; padding-top: 3px; }
.l-modify svg { width: 26px; height: 26px; margin-bottom: 8px; }
.l-wall { width: 42px; margin-left: 3px; }
.l-door { width: 42px; }
.l-byFace { width: 34px; margin-left: 4px; }
.l-shaft { width: 40px; }
.l-set { width: 34px; margin-left: 4px; }
.pcol { display: flex; flex-direction: column; padding-left: 6px; }
.item { height: 24px; justify-content: flex-start; gap: 5px; font-size: 12px; color: #333; white-space: nowrap; }
.item .caret { margin-left: 2px; }
.item:disabled { color: #b3b3b3; }
.p-build .pcol { width: 70px; padding-left: 3px; }
.p-build .pcol:nth-of-type(1) { width: 107px; }
.p-room .pcol { width: 119px; padding-left: 7px; }
.p-opening .pcol { padding-left: 4px; }
.p-opening .item { gap: 4px; }
.p-datum .pcol { padding-top: 12px; padding-left: 6px; }
.p-plane .pcol { padding-left: 7px; }
.optionbar { flex: none; height: 28px; background: #e1e1e3; }

.work { flex: 1; min-height: 0; display: flex; background: #f0f0f0; }
.side { width: 220px; flex: none; display: flex; flex-direction: column; min-height: 0; }
.dockhead { display: flex; align-items: center; height: 18px; flex: none; padding: 0 5px 0 4px; background: #bfcddb; color: #3c5068; }
.dockhead h3 { flex: 1; margin: 0; font: inherit; white-space: nowrap; }
.dockhead svg { width: 9px; height: 9px; }
.propbody { border: 1px solid #d9d9d9; border-top: 2px solid #6d7278; border-left: 2px solid #6d7278; padding-right: 18px; height: 306px; }
.typebox { display: flex; align-items: center; gap: 5px; height: 73px; padding: 3px 3px 2px; background: linear-gradient(#fff, #eee); border-bottom: 1px solid #ddd; }
.thumb { width: 66px; height: 67px; border: 1px solid #ccc; background: linear-gradient(#fff, #f0f0f0); display: flex; align-items: center; justify-content: center; }
.thumb svg { width: 32px; height: 32px; }
.typebox span { color: #333; }
.typerow { display: flex; justify-content: space-between; align-items: center; height: 25px; }
.typerow select { appearance: none; width: 116px; height: 23px; border: 1px solid #777; border-radius: 3px; font: inherit; color: #111; padding: 0 3px; background-image: linear-gradient(135deg, #222 50%, transparent 50%), linear-gradient(225deg, #222 50%, transparent 50%), linear-gradient(#f6f6f6, #d2d2d2); background-repeat: no-repeat; background-size: 4px 4px, 4px 4px, 100% 100%; background-position: calc(100% - 3px) 9px, calc(100% - 7px) 9px, 0 0; }
.edittype { gap: 5px; padding-right: 7px; }
.gridwrap { display: flex; height: 180px; }
table { width: 182px; border-collapse: collapse; table-layout: fixed; background: #fff; flex: none; }
th { height: 17px; padding: 0 5px 0 2px; text-align: left; font-weight: 400; background: #dadada; position: relative; }
.chev { position: absolute; right: 5px; top: 5px; width: 8px; height: 8px; }
td { height: 18px; padding: 0 0 0 8px; border-bottom: 1px dotted #888; white-space: nowrap; overflow: hidden; color: #111; line-height: 16px; }
td + td { padding: 0 0 0 2px; border-left: 1px dotted #888; border-right: 1px dotted #888; }
td.edit { padding: 0; }
td.edit input { display: block; width: 100%; height: 17px; border: 1px solid #000; padding: 0 4px; font: inherit; outline: 0; }
.dim td { color: #777; }
.split { display: flex; justify-content: space-between; padding-right: 3px; }
td.btncell { padding: 0 1px; }
.editbtn { width: 100%; height: 16px; border: 1px solid #666; border-bottom-width: 2px; border-radius: 2px; background: linear-gradient(#f8f8f8, #d7d7d7); }
.vscroll { flex: 1; display: flex; flex-direction: column; align-items: center; background: #efefef; padding: 7px 0 6px 1px; }
.vscroll b { width: 14px; border: 1px solid #999; border-radius: 2px; background: linear-gradient(90deg, #f6f6f6, #cfcfcf); }
.vscroll .down { margin-top: auto; }
.vscroll .thumb1 { height: 36px; margin-top: 7px; background: repeating-linear-gradient(#555 0 1px, transparent 1px 3px) center / 7px 7px no-repeat, linear-gradient(90deg, #f6f6f6, #cfcfcf); }
.thumb2 { height: 15px; margin-top: 8px; }
.propfoot { display: flex; justify-content: space-between; align-items: center; height: 25px; padding: 0 1px 0 2px; }
.propfoot a { color: #0b62a8; }
.propfoot button { width: 73px; height: 21px; border: 1px solid #b4b4b4; border-radius: 2px; background: #f4f4f4; color: #8a8a8a; font-size: 12px; }

.browser { flex: 1; min-height: 0; display: flex; flex-direction: column; margin-top: 5px; }
.treewrap { flex: 1; min-height: 0; display: flex; border-top: 2px solid #6d7278; border-left: 2px solid #6d7278; background: #fff; }
.tree { flex: 1; overflow: hidden; padding: 2px 0 0 4px; margin: 0; list-style: none; }
.tree ul { list-style: none; margin: 0; padding: 0; }
.tree li > ul { margin-left: 4px; border-left: 1px dotted #888; padding-left: 15px; }
.tree .branch > ul { margin-left: 23px; padding-left: 0; }
.node { display: flex; align-items: center; height: 18px; white-space: nowrap; color: #111; }
.node em { font-style: normal; background: #dedede; padding: 0 3px; margin-left: 4px; line-height: 18px; }
.box { width: 9px; height: 9px; border: 1px solid #888; background: linear-gradient(#444, #444) center / 5px 1px no-repeat #fff; flex: none; }
.dots { width: 6px; border-top: 1px dotted #888; }
.branch > .node .dots { width: 10px; margin-right: 3px; }
.leaf > .node .dots { width: 15px; margin-right: 3px; }
.vscroll.wide { flex: none; width: 18px; }
.hscroll { flex: none; display: flex; align-items: center; height: 17px; padding: 0 24px 0 6px; border-left: 2px solid #6d7278; background: #ededed; }
.hscroll b { width: 125px; height: 15px; margin-left: 8px; border: 1px solid #aaa; border-radius: 2px; text-align: center; font-size: 8px; line-height: 13px; background: linear-gradient(#f5f5f5, #d0d0d0); color: #444; }
.hscroll .right { margin-left: auto; }

.canvas { flex: 1; min-width: 0; margin-left: 4px; display: flex; flex-direction: column; border-left: 1px solid #666; border-top: 1px solid #666; }
.viewrow { flex: 1; min-height: 0; display: flex; }
.view { flex: 1; min-width: 0; position: relative; background: #fff; overflow: hidden; }
.scene { width: 100%; height: 100%; }
.mdi { position: absolute; right: 4px; top: 8px; display: flex; gap: 5px; }
.mdi svg { width: 13px; height: 12px; }
.cube { position: absolute; right: 11px; top: 64px; width: 98px; height: 72px; }
.cube text { font: 700 9px "Open Sans", sans-serif; fill: #888; stroke: none; }
.navbar { position: absolute; right: 1px; top: 146px; width: 35px; height: 118px; border: 2px solid #bdbdbd; border-radius: 6px; background: #f8f8f8; display: flex; flex-direction: column; align-items: center; justify-content: space-between; }
.navbar button { flex-direction: column; gap: 4px; }
.navbar .caret { border-top-color: #777; }
.navbar hr { width: 26px; margin: 0; border: 0; border-top: 1px solid #bbb; }
.navbar .mini { align-self: flex-end; margin: 1px 2px; }
.mini svg { width: 9px; height: 9px; }
.nv { width: 24px; height: 24px; }
.viewscroll { width: 17px; display: flex; flex-direction: column; align-items: center; justify-content: space-between; padding: 8px 0; background: #eee; }
.viewscroll b { width: 15px; height: 15px; border: 1px solid #999; border-radius: 2px; background: linear-gradient(90deg, #fafafa, #d2d2d2); }
.viewbar { flex: none; display: flex; align-items: center; height: 17px; gap: 5px; background: #f7f7f7; padding-left: 12px; }
.scale { width: 62px; justify-content: flex-start; white-space: nowrap; }
.hbar { flex: 1; height: 17px; display: flex; align-items: center; justify-content: space-between; padding: 0 5px 0 5px; background: #ececec; }
.hbar b { width: 15px; height: 15px; border: 1px solid #999; border-radius: 2px; background: linear-gradient(#fafafa, #cfcfcf); }
.grip { width: 10px; height: 9px; margin-right: 4px; background: radial-gradient(circle, #aaa 1px, transparent 1px) 0 0 / 3px 3px; }

.status { flex: none; height: 25px; margin-top: 1px; display: flex; align-items: center; border: 1px solid #777; border-left: 0; background: linear-gradient(#efefef, #c8c8c8 60%, #d6d6d6); }
.msg { width: 408px; padding-left: 2px; color: #111; white-space: nowrap; }
.sb { width: 24px; height: 22px; background: #d9d9d9; }
.status select { appearance: none; height: 21px; border: 1px solid #ddd; font: inherit; font-size: 12px; color: #777; padding: 0 3px; background: linear-gradient(135deg, #999 50%, transparent 50%) calc(100% - 3px) 9px / 4px 4px no-repeat, linear-gradient(225deg, #999 50%, transparent 50%) calc(100% - 7px) 9px / 4px 4px no-repeat, #fdfdfd; opacity: 1; }
.status .ws { width: 205px; margin: 0 5px 0 4px; }
.sb.count { width: 50px; gap: 5px; color: #222; justify-content: flex-start; padding-left: 3px; background: #d4d4d4; }
.sb.count + .sb { margin-left: 2px; margin-right: 2px; }
.status .opt { width: 156px; margin-left: 2px; }
.sel { margin-left: auto; display: flex; gap: 2px; height: 22px; width: 136px; overflow: hidden; }
.sel .sb { flex: none; }
</style>
